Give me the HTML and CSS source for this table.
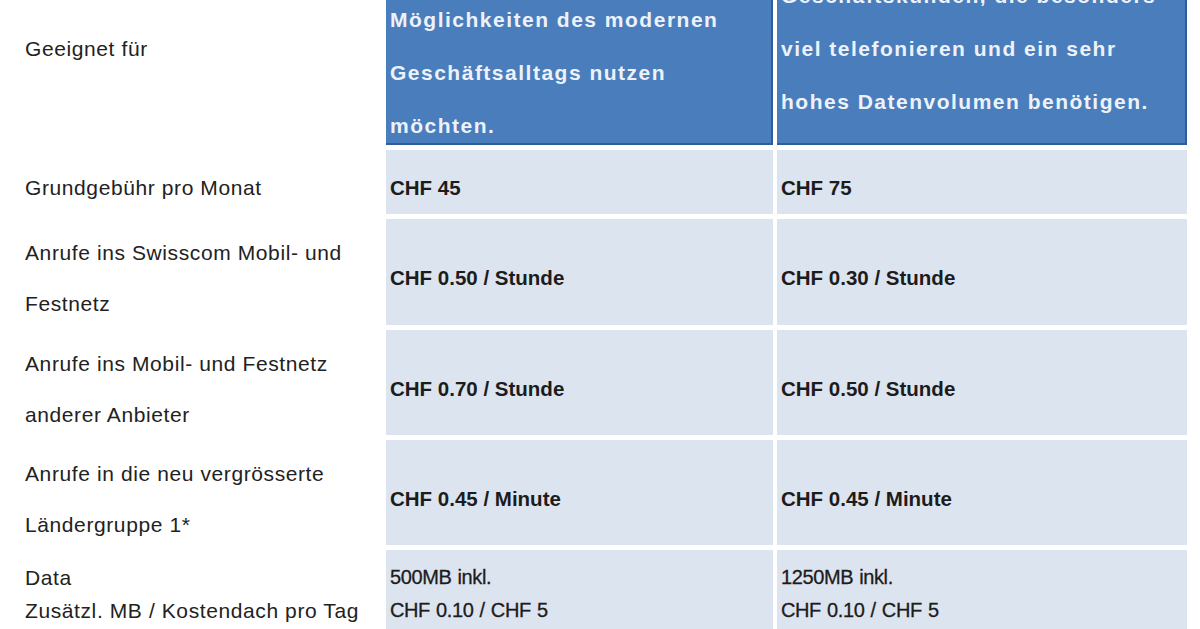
FILE: index.html
```html
<!DOCTYPE html>
<html lang="de">
<head>
<meta charset="utf-8">
<title>Tarifvergleich</title>
<link rel="stylesheet" href="styles.css">
</head>
<body>
<div class="page">
  <div class="grid">
    <div class="label head-label">Geeignet für</div>
    <div class="head head-a">
      <p>Für Geschäftskunden, die alle<br>Möglichkeiten des modernen<br>Geschäftsalltags nutzen<br>möchten.</p>
    </div>
    <div class="head head-b">
      <p>Geschäftskunden, die besonders<br>viel telefonieren und ein sehr<br>hohes Datenvolumen benötigen.</p>
    </div>

    <div class="label row">Grundgebühr pro Monat</div>
    <div class="cell row">CHF 45</div>
    <div class="cell row">CHF 75</div>

    <div class="label row two">Anrufe ins Swisscom Mobil- und<br>Festnetz</div>
    <div class="cell row">CHF 0.50 / Stunde</div>
    <div class="cell row">CHF 0.30 / Stunde</div>

    <div class="label row two">Anrufe ins Mobil- und Festnetz<br>anderer Anbieter</div>
    <div class="cell row">CHF 0.70 / Stunde</div>
    <div class="cell row">CHF 0.50 / Stunde</div>

    <div class="label row two">Anrufe in die neu vergrösserte<br>Ländergruppe 1*</div>
    <div class="cell row">CHF 0.45 / Minute</div>
    <div class="cell row">CHF 0.45 / Minute</div>

    <div class="label last">Data<br>Zusätzl. MB / Kostendach pro Tag</div>
    <div class="cell last narrow">500MB inkl.<br>CHF 0.10 / CHF 5</div>
    <div class="cell last narrow">1250MB inkl.<br>CHF 0.10 / CHF 5</div>
  </div>
</div>
</body>
</html>
```

FILE: styles.css
```css
html, body {
  margin: 0;
  padding: 0;
  background: #ffffff;
  overflow: hidden;
}

body {
  font-family: "Liberation Sans", Arial, sans-serif;
  color: #222222;
}

.page {
  width: 1200px;
  height: 629px;
  overflow: hidden;
}

.grid {
  margin-top: -51px;
  display: grid;
  grid-template-columns: 382px 387px 410px;
  grid-template-rows: 196px 64px 106px 105px 105px 100px;
  column-gap: 4px;
  row-gap: 5px;
}

.label {
  font-size: 21px;
  letter-spacing: 0.6px;
  color: #222222;
  padding-left: 25px;
  display: flex;
  align-items: center;
}

.head-label {
  padding-top: 4px;
}

.head {
  background: #4a7dbb;
  border-right: 2px solid #2f5d98;
  border-bottom: 2px solid #2f5d98;
  display: flex;
  align-items: center;
  padding-left: 4px;
  color: #edf2fa;
  font-weight: bold;
  font-size: 21px;
  letter-spacing: 1.5px;
  line-height: 53px;
}

.head p {
  margin: 0;
  white-space: nowrap;
}

.head-b {
  padding-top: 4px;
}

.cell {
  background: #dce4ef;
  padding-left: 4px;
  display: flex;
  align-items: center;
  font-weight: bold;
  font-size: 20.5px;
  color: #1c1c1c;
}

.row {
  padding-top: 12px;
}

.two {
  line-height: 51px;
}

.last {
  align-items: flex-start;
  padding-top: 11px;
  line-height: 33px;
}

.narrow {
  font-weight: normal;
  font-size: 20px;
  letter-spacing: -0.4px;
  word-spacing: 1px;
  color: #1c1c1c;
  -webkit-text-stroke: 0.3px #1c1c1c;
}
```
